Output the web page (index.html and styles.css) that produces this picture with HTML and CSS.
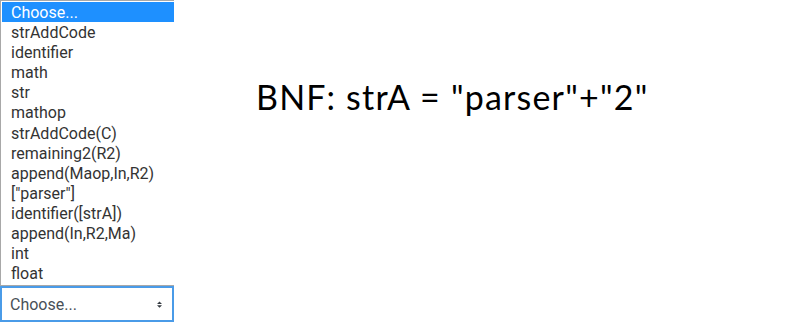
FILE: index.html
```html
<!DOCTYPE html>
<html>
<head>
<meta charset="utf-8">
<link rel="stylesheet" href="styles.css">
</head>
<body>
<div class="page">
  <div class="picker">
    <ul class="listbox">
      <li class="opt active">Choose...</li>
      <li class="opt">strAddCode</li>
      <li class="opt">identifier</li>
      <li class="opt">math</li>
      <li class="opt">str</li>
      <li class="opt">mathop</li>
      <li class="opt">strAddCode(C)</li>
      <li class="opt">remaining2(R2)</li>
      <li class="opt">append(Maop,In,R2)</li>
      <li class="opt">["parser"]</li>
      <li class="opt">identifier([strA])</li>
      <li class="opt">append(In,R2,Ma)</li>
      <li class="opt">int</li>
      <li class="opt">float</li>
    </ul>
    <div class="select">
      <span class="select-label">Choose...</span>
      <svg class="caret" width="5" height="7" viewBox="0 0 4 5"><path d="M2 0L0 2h4zm0 5L0 3h4z" fill="#343a40"/></svg>
    </div>
  </div>
  <div class="bnf">BNF: strA = "parser"+"2"</div>
</div>
</body>
</html>
```
FILE: styles.css
```css
html, body {
  margin: 0;
  padding: 0;
  background: #fff;
}
.page {
  display: flex;
  align-items: flex-start;
  width: 791px;
  height: 330px;
}
.picker {
  width: 174px;
  display: flex;
  flex-direction: column;
}
.listbox {
  list-style: none;
  margin: 0;
  padding: 1px 0 2px 1px;
  border-top: 1px solid #a8a8a8;
  border-left: 1px solid #a8a8a8;
  border-bottom: 1px solid #a8a8a8;
  font-family: Roboto, "Liberation Sans", sans-serif;
  font-size: 16px;
  color: #333;
}
.opt {
  height: 20.1px;
  line-height: 21px;
  padding-left: 9px;
  white-space: nowrap;
}
.opt.active {
  background: #1e90ff;
  color: #fff;
}
.select {
  height: 32px;
  border: 2px solid #4a9be8;
  display: flex;
  align-items: center;
  justify-content: space-between;
  padding: 0 10px 0 8px;
  font-family: Roboto, "Liberation Sans", sans-serif;
  font-size: 16px;
  color: #495057;
}
.caret {
  display: block;
}
.bnf {
  margin-left: 82px;
  margin-top: 76px;
  font-family: Lato, "Open Sans", sans-serif;
  font-size: 34px;
  letter-spacing: 1.2px;
  color: #000;
  white-space: nowrap;
}
```
